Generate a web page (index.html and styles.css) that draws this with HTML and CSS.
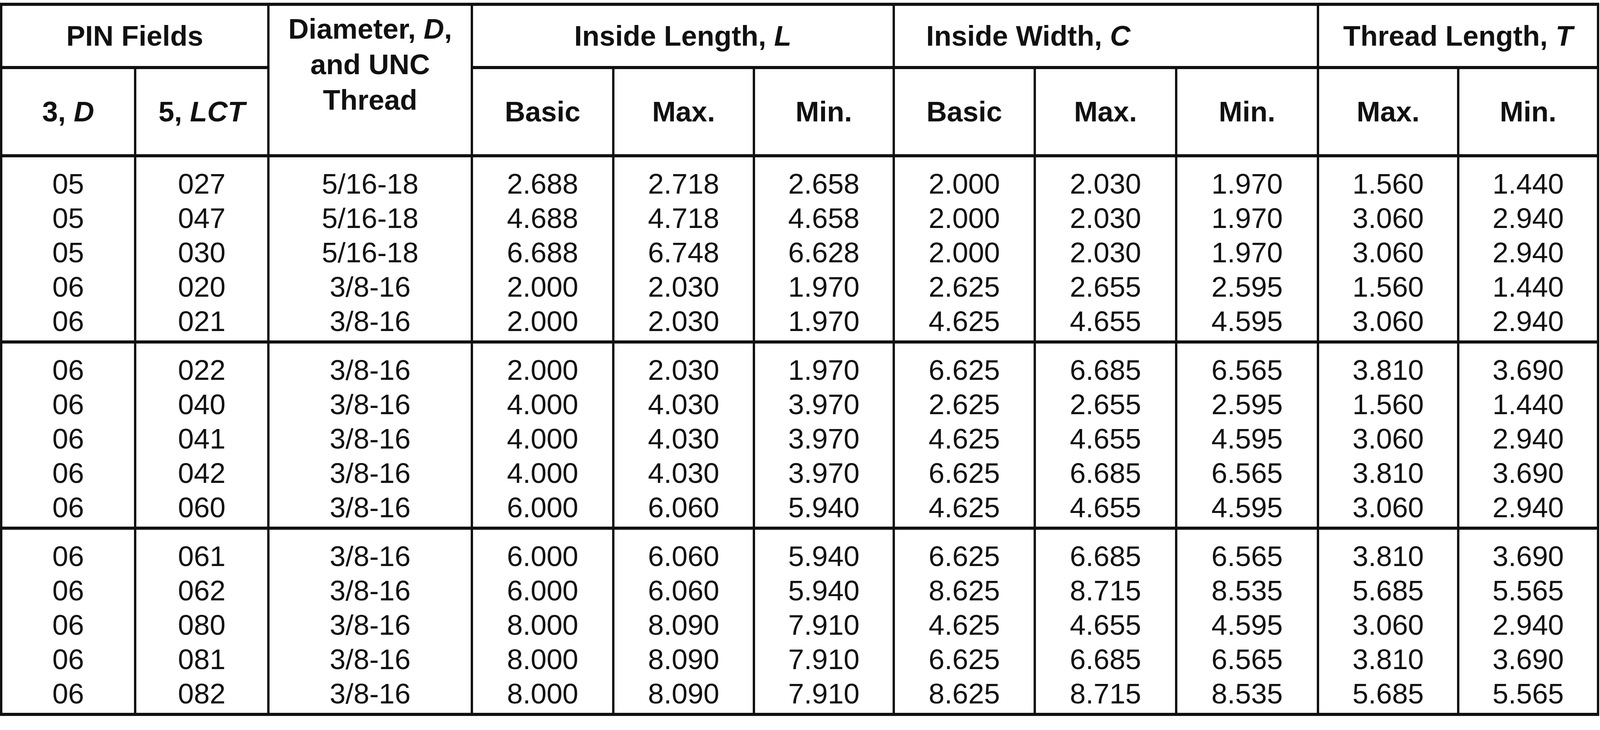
FILE: index.html
```html
<!DOCTYPE html>
<html lang="en">
<head>
<meta charset="utf-8">
<title>PIN Dimensions Table</title>
<link rel="stylesheet" href="styles.css">
</head>
<body>
<table class="spec">
  <colgroup>
    <col class="c1"><col class="c2"><col class="c3">
    <col class="c4"><col class="c5"><col class="c6">
    <col class="c7"><col class="c8"><col class="c9">
    <col class="c10"><col class="c11">
  </colgroup>
  <thead>
    <tr class="hrow1">
      <th colspan="2">PIN Fields</th>
      <th rowspan="2" class="dia">Diameter, <i>D</i>,<br>and UNC<br>Thread</th>
      <th colspan="3">Inside Length, <i>L</i></th>
      <th colspan="3" class="iw">Inside Width, <i>C</i></th>
      <th colspan="2">Thread Length, <i>T</i></th>
    </tr>
    <tr class="hrow2">
      <th>3, <i>D</i></th>
      <th>5, <i>LCT</i></th>
      <th>Basic</th><th>Max.</th><th>Min.</th>
      <th>Basic</th><th>Max.</th><th>Min.</th>
      <th>Max.</th><th>Min.</th>
    </tr>
  </thead>
  <tbody>
    <tr><td>05</td><td>027</td><td>5/16-18</td><td>2.688</td><td>2.718</td><td>2.658</td><td>2.000</td><td>2.030</td><td>1.970</td><td>1.560</td><td>1.440</td></tr>
    <tr><td>05</td><td>047</td><td>5/16-18</td><td>4.688</td><td>4.718</td><td>4.658</td><td>2.000</td><td>2.030</td><td>1.970</td><td>3.060</td><td>2.940</td></tr>
    <tr><td>05</td><td>030</td><td>5/16-18</td><td>6.688</td><td>6.748</td><td>6.628</td><td>2.000</td><td>2.030</td><td>1.970</td><td>3.060</td><td>2.940</td></tr>
    <tr><td>06</td><td>020</td><td>3/8-16</td><td>2.000</td><td>2.030</td><td>1.970</td><td>2.625</td><td>2.655</td><td>2.595</td><td>1.560</td><td>1.440</td></tr>
    <tr><td>06</td><td>021</td><td>3/8-16</td><td>2.000</td><td>2.030</td><td>1.970</td><td>4.625</td><td>4.655</td><td>4.595</td><td>3.060</td><td>2.940</td></tr>
  </tbody>
  <tbody>
    <tr><td>06</td><td>022</td><td>3/8-16</td><td>2.000</td><td>2.030</td><td>1.970</td><td>6.625</td><td>6.685</td><td>6.565</td><td>3.810</td><td>3.690</td></tr>
    <tr><td>06</td><td>040</td><td>3/8-16</td><td>4.000</td><td>4.030</td><td>3.970</td><td>2.625</td><td>2.655</td><td>2.595</td><td>1.560</td><td>1.440</td></tr>
    <tr><td>06</td><td>041</td><td>3/8-16</td><td>4.000</td><td>4.030</td><td>3.970</td><td>4.625</td><td>4.655</td><td>4.595</td><td>3.060</td><td>2.940</td></tr>
    <tr><td>06</td><td>042</td><td>3/8-16</td><td>4.000</td><td>4.030</td><td>3.970</td><td>6.625</td><td>6.685</td><td>6.565</td><td>3.810</td><td>3.690</td></tr>
    <tr><td>06</td><td>060</td><td>3/8-16</td><td>6.000</td><td>6.060</td><td>5.940</td><td>4.625</td><td>4.655</td><td>4.595</td><td>3.060</td><td>2.940</td></tr>
  </tbody>
  <tbody>
    <tr><td>06</td><td>061</td><td>3/8-16</td><td>6.000</td><td>6.060</td><td>5.940</td><td>6.625</td><td>6.685</td><td>6.565</td><td>3.810</td><td>3.690</td></tr>
    <tr><td>06</td><td>062</td><td>3/8-16</td><td>6.000</td><td>6.060</td><td>5.940</td><td>8.625</td><td>8.715</td><td>8.535</td><td>5.685</td><td>5.565</td></tr>
    <tr><td>06</td><td>080</td><td>3/8-16</td><td>8.000</td><td>8.090</td><td>7.910</td><td>4.625</td><td>4.655</td><td>4.595</td><td>3.060</td><td>2.940</td></tr>
    <tr><td>06</td><td>081</td><td>3/8-16</td><td>8.000</td><td>8.090</td><td>7.910</td><td>6.625</td><td>6.685</td><td>6.565</td><td>3.810</td><td>3.690</td></tr>
    <tr><td>06</td><td>082</td><td>3/8-16</td><td>8.000</td><td>8.090</td><td>7.910</td><td>8.625</td><td>8.715</td><td>8.535</td><td>5.685</td><td>5.565</td></tr>
  </tbody>
</table>
</body>
</html>
```
FILE: styles.css
```css
html, body {
  margin: 0;
  padding: 0;
  background: #ffffff;
}

.spec {
  box-sizing: border-box;
  margin-top: 7px;
  width: 4094px;
  border-collapse: separate;
  border-spacing: 0;
  table-layout: fixed;
  border-top: 8px solid #111111;
  border-left: 6px solid #111111;
  font-family: "Liberation Sans", Arial, Helvetica, sans-serif;
  color: #111111;
}

.c1  { width: 343px; }
.c2  { width: 341px; }
.c3  { width: 521px; }
.c4  { width: 362px; }
.c5  { width: 360px; }
.c6  { width: 358px; }
.c7  { width: 361px; }
.c8  { width: 362px; }
.c9  { width: 363px; }
.c10 { width: 359px; }
.c11 { width: 358px; }

.spec th,
.spec td {
  box-sizing: border-box;
  padding: 0;
  text-align: center;
  border-right: 6px solid #111111;
  white-space: nowrap;
}

.spec th {
  font-size: 72.5px;
  line-height: 91px;
  font-weight: bold;
  border-bottom: 8px solid #111111;
  vertical-align: middle;
}

.spec i {
  font-style: italic;
}

.hrow1 th {
  padding-top: 31px;
  padding-bottom: 32px;
}

.hrow2 th {
  padding-top: 63px;
  padding-bottom: 64px;
}

.spec th.dia {
  vertical-align: top;
  padding-top: 13px;
  padding-bottom: 0;
}

.spec th.iw {
  text-align: left;
  padding-left: 80px;
}

.spec td {
  font-size: 73px;
  line-height: 88px;
  font-weight: normal;
  vertical-align: middle;
}

.spec tbody tr:first-child td {
  padding-top: 24px;
}

.spec tbody tr:last-child td {
  border-bottom: 8px solid #111111;
  padding-bottom: 5px;
}
```
